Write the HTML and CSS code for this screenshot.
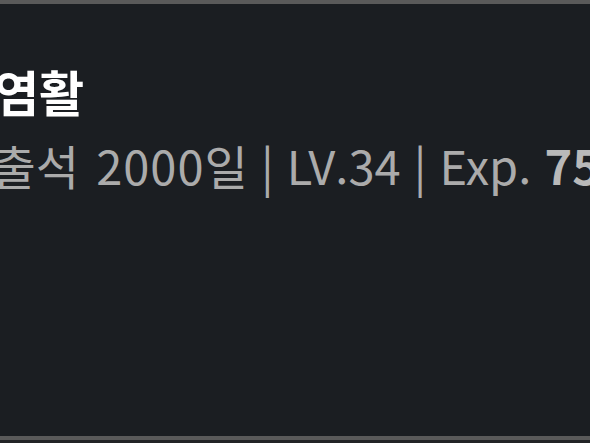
FILE: index.html
```html
<!DOCTYPE html>
<html lang="ko">
<head>
<meta charset="utf-8">
<link rel="stylesheet" href="styles.css">
</head>
<body>
<div class="screen">
  <div class="bar-top"></div>
  <div class="card">
    <div class="name">염활</div>
    <div class="stats"><span class="label">출석</span> <span class="num">2000</span>일 | LV.34 | Exp. <b class="exp">75</b></div>
  </div>
  <div class="bar-bottom"></div>
  <div class="bar-base"></div>
</div>
</body>
</html>
```
FILE: styles.css
```css
html, body {
  margin: 0;
  padding: 0;
  background: #1b1e22;
}
.screen {
  width: 590px;
  height: 443px;
  display: flex;
  flex-direction: column;
  overflow: hidden;
  font-family: "Noto Sans CJK KR", "Noto Sans", sans-serif;
}
.bar-top {
  height: 4px;
  background: #5a5a5a;
  flex: none;
}
.card {
  flex: 1;
  display: flex;
  flex-direction: column;
  gap: 24px;
  padding-top: 62px;
  white-space: nowrap;
}
.name {
  font-size: 49px;
  font-weight: 700;
  line-height: 50px;
  color: #ffffff;
  margin-left: -6px;
}
.stats {
  font-size: 47px;
  font-weight: 400;
  line-height: 50px;
  color: #ababab;
  margin-left: -7.5px;
}
.label {
  margin-right: 4px;
}
.num {
  letter-spacing: 1px;
}
.exp {
  font-weight: 700;
  color: #b9b9b9;
}
.bar-bottom {
  height: 4px;
  background: #5a5a5a;
  flex: none;
}
.bar-base {
  height: 3px;
  background: #222326;
  flex: none;
}
```
